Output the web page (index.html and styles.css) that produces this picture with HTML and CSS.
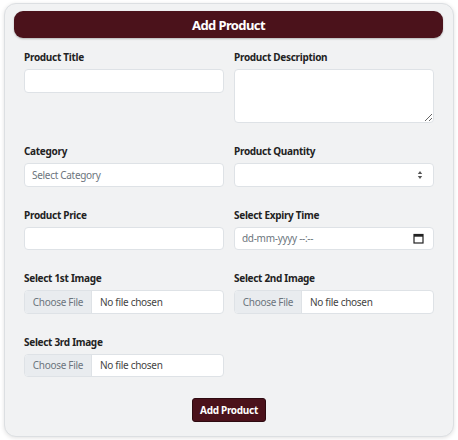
FILE: index.html
```html
<!DOCTYPE html>
<html lang="en">
<head>
<meta charset="utf-8">
<title>Add Product</title>
<link rel="stylesheet" href="styles.css">
</head>
<body>
<div class="card">
  <div class="title">Add Product</div>
  <form class="form">
    <div class="field">
      <label class="label">Product Title</label>
      <input class="control" type="text">
    </div>
    <div class="field">
      <label class="label">Product Description</label>
      <textarea class="control area"></textarea>
    </div>
    <div class="field">
      <label class="label">Category</label>
      <input class="control" type="text" placeholder="Select Category">
    </div>
    <div class="field">
      <label class="label">Product Quantity</label>
      <div class="control fake">
        <span class="spacer"></span>
        <svg class="spin" width="6" height="12" viewBox="0 0 6 12"><path d="M3 2 L5.2 5 H0.8 Z M3 10 L5.2 7 H0.8 Z" fill="#555"/></svg>
      </div>
    </div>
    <div class="field">
      <label class="label">Product Price</label>
      <input class="control" type="text">
    </div>
    <div class="field">
      <label class="label">Select Expiry Time</label>
      <div class="control fake">
        <span class="ph">dd-mm-yyyy --:--</span>
        <svg class="cal" width="11" height="11" viewBox="0 0 11 11"><rect x="1" y="1.5" width="9" height="8.5" fill="none" stroke="#222" stroke-width="1.2"/><rect x="1" y="1.5" width="9" height="2.2" fill="#222"/></svg>
      </div>
    </div>
    <div class="field">
      <label class="label">Select 1st Image</label>
      <div class="control file"><span class="fbtn">Choose File</span><span class="fname">No file chosen</span></div>
    </div>
    <div class="field">
      <label class="label">Select 2nd Image</label>
      <div class="control file"><span class="fbtn">Choose File</span><span class="fname">No file chosen</span></div>
    </div>
    <div class="field">
      <label class="label">Select 3rd Image</label>
      <div class="control file"><span class="fbtn">Choose File</span><span class="fname">No file chosen</span></div>
    </div>
    <div class="actions">
      <button class="submit" type="button">Add Product</button>
    </div>
  </form>
</div>
</body>
</html>
```
FILE: styles.css
```css
* { box-sizing: border-box; }
body {
  margin: 0;
  background: #ffffff;
  font-family: "Noto Sans", "Open Sans", sans-serif;
  letter-spacing: -0.3px;
}
.card {
  margin: 3px 4px;
  width: 450px;
  height: 434px;
  background: #f1f2f3;
  border: 1px solid #dcdfe2;
  border-radius: 12px;
  padding: 7px 10px 14px 9px;
  box-shadow: 0 1px 4px rgba(0, 0, 0, 0.12);
}
.title {
  height: 27px;
  background: #4b121b;
  border-radius: 9px;
  color: #fff;
  font-weight: 700;
  font-size: 13px;
  letter-spacing: -0.6px;
  display: flex;
  align-items: center;
  justify-content: center;
  box-shadow: 0 1px 2px rgba(0, 0, 0, 0.25);
}
.form {
  display: grid;
  grid-template-columns: 200px 200px;
  column-gap: 10px;
  row-gap: 21px;
  margin: 12px 0 0 10px;
}
.label {
  display: block;
  font-size: 10px;
  font-weight: 700;
  line-height: 14px;
  margin-bottom: 5px;
  color: #222;
}
.control {
  display: block;
  width: 100%;
  height: 23.5px;
  border: 1px solid #dee2e6;
  border-radius: 4px;
  background: #fff;
  font-family: inherit;
  font-size: 10px;
  letter-spacing: -0.3px;
  color: #333;
  padding: 0 7px;
  margin: 0;
  outline: none;
}
.control::placeholder { color: #6c757d; }
.area {
  height: 54px;
  resize: vertical;
}
.fake {
  display: flex;
  align-items: center;
  justify-content: space-between;
}
.ph { color: #6c757d; }
.spin { margin-right: 3px; }
.cal { margin-right: 2px; }
.file {
  display: flex;
  align-items: stretch;
  padding: 0;
  overflow: hidden;
}
.fbtn {
  width: 67px;
  background: #e9ecef;
  border-right: 1px solid #dee2e6;
  color: #6c757d;
  display: flex;
  align-items: center;
  justify-content: center;
}
.fname {
  display: flex;
  align-items: center;
  padding-left: 8px;
  color: #444;
}
.actions {
  grid-column: 1 / span 2;
  display: flex;
  justify-content: center;
}
.submit {
  height: 24px;
  padding: 0 7px;
  background: #4b121b;
  border: 1px solid #2e0a10;
  border-radius: 3px;
  color: #fff;
  font-family: inherit;
  font-size: 10px;
  letter-spacing: -0.3px;
  font-weight: 700;
}
```
